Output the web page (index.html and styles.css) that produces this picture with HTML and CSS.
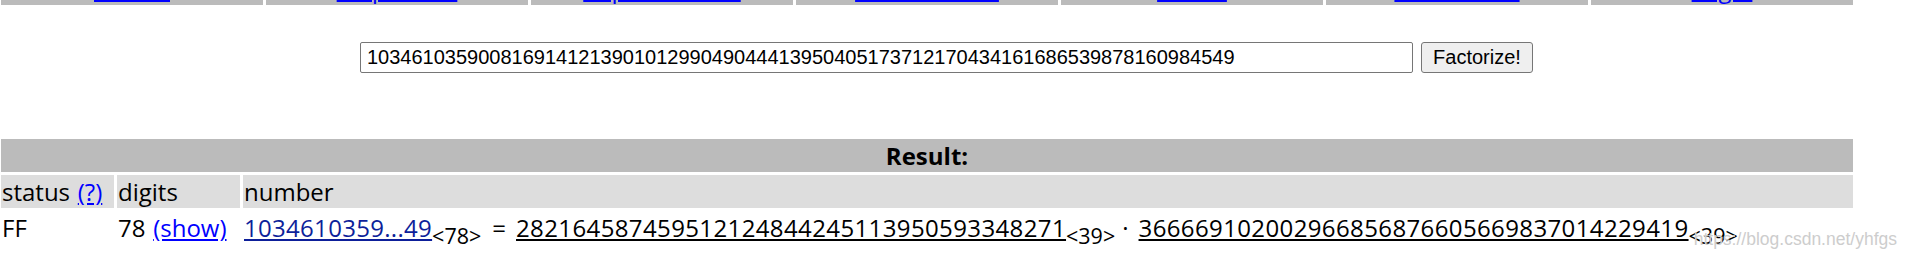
FILE: index.html
```html
<!DOCTYPE html>
<html>
<head>
<meta charset="utf-8">
<link rel="stylesheet" href="styles.css">
</head>
<body>
<table class="nav">
  <tr>
    <td><a href="#">Search</a></td>
    <td><a href="#">Sequences</a></td>
    <td><a href="#">Report results</a></td>
    <td><a href="#">Factor tables</a></td>
    <td><a href="#">Status</a></td>
    <td><a href="#">Downloads</a></td>
    <td><a href="#">Login</a></td>
  </tr>
</table>
<form class="search">
  <input class="query" type="text" value="103461035900816914121390101299049044413950405173712170434161686539878160984549">
  <button class="go" type="button">Factorize!</button>
</form>
<table class="result">
  <colgroup><col class="c1"><col class="c2"><col></colgroup>
  <tr><th class="title" colspan="3">Result:</th></tr>
  <tr class="head"><td>status <a class="lnk" href="#">(?)</a></td><td>digits</td><td>number</td></tr>
  <tr class="data">
    <td>FF</td>
    <td>78 <a class="lnk" href="#">(show)</a></td>
    <td><a class="num main" href="#">1034610359...49</a><sub>&lt;78&gt;</sub><span class="op">=</span><a class="num fac" href="#">282164587459512124844245113950593348271</a><sub>&lt;39&gt;</sub><span class="op dot">·</span><a class="num fac" href="#">366669102002966856876605669837014229419</a><sub>&lt;39&gt;</sub></td>
  </tr>
</table>
<div class="watermark">https://blog.csdn.net/yhfgs</div>
</body>
</html>
```

FILE: styles.css
```css
html, body {
  margin: 0;
  padding: 0;
  background: #ffffff;
}
body {
  position: relative;
  width: 1906px;
  height: 261px;
  overflow: hidden;
  font-family: "Open Sans", "Noto Sans", sans-serif;
  font-size: 24px;
  color: #000;
}
table {
  border-collapse: separate;
  border-spacing: 3px;
  margin-left: -2px;
  width: 1858px;
  table-layout: fixed;
}
td, th {
  padding: 1px 1px;
  line-height: 31px;
  height: 31px;
  white-space: nowrap;
  overflow: hidden;
}
.nav {
  margin-top: -31px;
}
.nav td {
  background: #bbbbbb;
  text-align: center;
}
.nav a {
  color: #0000ff;
}
.search {
  display: flex;
  justify-content: center;
  gap: 8px;
  margin: 34px 0 0 0;
  padding-right: 13px;
}
.query {
  box-sizing: border-box;
  width: 1053px;
  height: 31px;
  margin: 0;
  padding: 0 6px;
  border: 1px solid #767676;
  border-radius: 2px;
  font-family: "Liberation Sans", Arial, sans-serif;
  font-size: 20px;
  color: #000;
}
.go {
  box-sizing: border-box;
  width: 112px;
  height: 31px;
  margin: 0;
  padding: 0;
  border: 1px solid #767676;
  border-radius: 3px;
  background: #efefef;
  font-family: "Liberation Sans", Arial, sans-serif;
  font-size: 20px;
  color: #000;
}
.result {
  margin-top: 63px;
  word-spacing: 1.5px;
}
.c1 { width: 113px; }
.c2 { width: 123px; }
.title {
  background: #bbbbbb;
  font-weight: bold;
  text-align: center;
}
.head td {
  background: #dddddd;
}
.lnk {
  color: #0000ff;
}
.num {
  letter-spacing: 0.3px;
}
.fac {
  letter-spacing: 0.38px;
}
.main {
  color: #0d1f9a;
}
.fac {
  color: #000;
}
.op {
  display: inline-block;
  margin: 0 10px 0 11px;
}
.op.dot {
  margin: 0 10px 0 7px;
}
sub {
  font-size: 21.5px;
  line-height: 0;
  vertical-align: -7px;
}
.watermark {
  position: absolute;
  right: 9px;
  top: 229px;
  font-family: "Liberation Sans", Arial, sans-serif;
  font-size: 17.5px;
  color: #cdcdcd;
}
```
